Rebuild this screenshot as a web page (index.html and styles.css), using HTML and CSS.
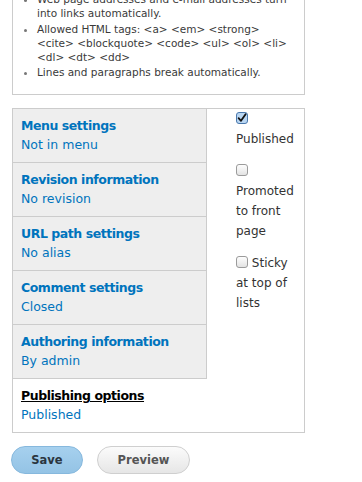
FILE: index.html
```html
<!DOCTYPE html>
<html>
<head>
<meta charset="utf-8">
<title>Node form</title>
<link rel="stylesheet" href="styles.css">
</head>
<body>
<div class="page">
  <div class="desc">
    <ul class="tips">
      <li>Web page addresses and e-mail addresses turn into links automatically.</li>
      <li>Allowed HTML tags: &lt;a&gt; &lt;em&gt; &lt;strong&gt; &lt;cite&gt; &lt;blockquote&gt; &lt;code&gt; &lt;ul&gt; &lt;ol&gt; &lt;li&gt; &lt;dl&gt; &lt;dt&gt; &lt;dd&gt;</li>
      <li>Lines and paragraphs break automatically.</li>
    </ul>
  </div>

  <div class="vt">
    <ul class="vt-list">
      <li class="vt-tab"><a class="vt-link" href="#"><strong class="vt-title">Menu settings</strong><span class="vt-summary">Not in menu</span></a></li>
      <li class="vt-tab"><a class="vt-link" href="#"><strong class="vt-title">Revision information</strong><span class="vt-summary">No revision</span></a></li>
      <li class="vt-tab"><a class="vt-link" href="#"><strong class="vt-title">URL path settings</strong><span class="vt-summary">No alias</span></a></li>
      <li class="vt-tab"><a class="vt-link" href="#"><strong class="vt-title">Comment settings</strong><span class="vt-summary">Closed</span></a></li>
      <li class="vt-tab"><a class="vt-link" href="#"><strong class="vt-title">Authoring information</strong><span class="vt-summary">By admin</span></a></li>
      <li class="vt-tab is-selected"><a class="vt-link" href="#"><strong class="vt-title">Publishing options</strong><span class="vt-summary">Published</span></a></li>
    </ul>
    <div class="vt-pane">
      <div class="opt">
        <span class="cb is-checked"><svg width="12" height="12" viewBox="0 0 12 12"><rect x="0.5" y="0.5" width="11" height="11" rx="2.5" fill="#b9d6f2" stroke="#4a78ad"/><path d="M2.6 6.2 L5 8.8 L9.6 2.2" fill="none" stroke="#111" stroke-width="1.8" stroke-linecap="round" stroke-linejoin="round"/></svg></span>
        <label class="opt-label">Published</label>
      </div>
      <div class="opt">
        <span class="cb"><svg width="12" height="12" viewBox="0 0 12 12"><defs><linearGradient id="g1" x1="0" y1="0" x2="0" y2="1"><stop offset="0" stop-color="#ffffff"/><stop offset="1" stop-color="#e2e2e2"/></linearGradient></defs><rect x="0.5" y="0.5" width="11" height="11" rx="2.5" fill="url(#g1)" stroke="#9b9b9b"/></svg></span>
        <label class="opt-label">Promoted to front page</label>
      </div>
      <div class="opt">
        <span class="cb"><svg width="12" height="12" viewBox="0 0 12 12"><rect x="0.5" y="0.5" width="11" height="11" rx="2.5" fill="url(#g1)" stroke="#9b9b9b"/></svg></span>
        <label class="opt-label">Sticky at top of lists</label>
      </div>
    </div>
  </div>

  <div class="actions">
    <button class="btn btn-save" type="button">Save</button>
    <button class="btn btn-preview" type="button">Preview</button>
  </div>
</div>
</body>
</html>
```

FILE: styles.css
```css
html, body {
  margin: 0;
  padding: 0;
  background: #fff;
}

body {
  font-family: "DejaVu Sans", Verdana, sans-serif;
  color: #333;
}

.page {
  padding-left: 12px;
  width: 293px;
}

.desc {
  margin-top: -9px;
  border: 1px solid #ccc;
  padding-bottom: 15px;
}

.tips {
  margin: 0;
  padding: 0 10px 0 24px;
  font-size: 10.5px;
  line-height: 14px;
  color: #3a3a3a;
}

.tips li + li {
  margin-top: 1.5px;
}

.tips li::marker {
  color: #777;
}

.vt {
  display: flex;
  margin-top: 13px;
  border: 1px solid #ccc;
}

.vt-list {
  list-style: none;
  margin: 0;
  padding: 0;
  width: 194px;
  flex: none;
}

.vt-tab {
  background: #eee;
  border-right: 1px solid #ccc;
  border-bottom: 1px solid #ccc;
}

.vt-tab.is-selected {
  background: #fff;
  border-right-color: #fff;
  border-bottom: none;
}

.vt-link {
  display: flex;
  flex-direction: column;
  padding: 8px 8px 8px 8px;
  text-decoration: none;
  color: #0074bd;
  font-size: 12.5px;
  line-height: 18px;
}

.vt-title {
  font-weight: bold;
  letter-spacing: -0.45px;
}

.vt-summary {
  line-height: 19px;
}

.is-selected .vt-title {
  color: #000;
  text-decoration: underline;
}

.vt-pane {
  flex: 1;
  padding: 0 8px 0 29px;
  font-size: 12px;
  line-height: 20px;
  color: #333;
}

.opt + .opt {
  margin-top: 12px;
}

.cb {
  display: inline-block;
  width: 12px;
  height: 12px;
  vertical-align: -1px;
}

.cb svg {
  display: block;
}

.actions {
  display: flex;
  gap: 14px;
  margin-top: 13px;
  margin-left: -1px;
}

.btn {
  box-sizing: border-box;
  height: 28px;
  padding: 0;
  border-radius: 14px;
  font-family: "DejaVu Sans", Verdana, sans-serif;
  font-size: 11.5px;
  font-weight: bold;
  line-height: 26px;
  text-align: center;
  cursor: pointer;
}

.btn-save {
  width: 72px;
  border: 1px solid #86b8dd;
  background: linear-gradient(#a6d0ee, #94c3e5);
  color: #2b3640;
}

.btn-preview {
  width: 93px;
  border: 1px solid #cfcfcf;
  background: linear-gradient(#fbfbfb, #e6e6e6);
  color: #555;
}
```
